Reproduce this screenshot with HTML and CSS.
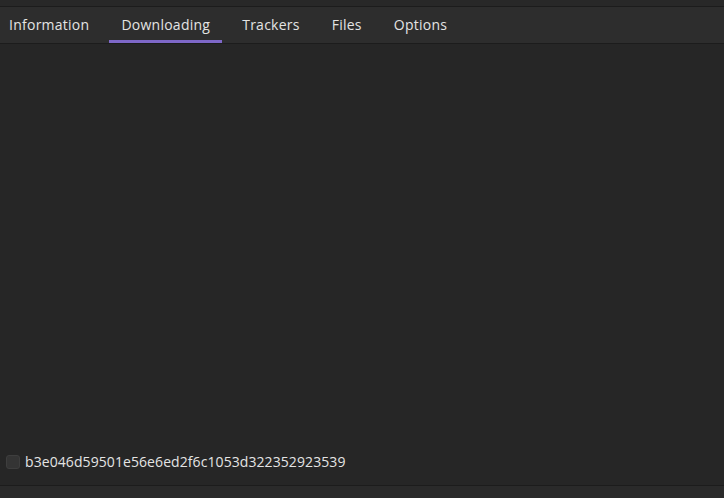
FILE: index.html
```html
<!DOCTYPE html>
<html>
<head>
<meta charset="utf-8">
<link rel="stylesheet" href="styles.css">
</head>
<body>
<div class="app">
  <div class="topstrip"></div>
  <nav class="tabs">
    <div class="tab">Information</div>
    <div class="tab active">Downloading</div>
    <div class="tab">Trackers</div>
    <div class="tab">Files</div>
    <div class="tab">Options</div>
  </nav>
  <main class="content">
    <label class="item">
      <span class="check"></span>
      <span class="hash">b3e046d59501e56e6ed2f6c1053d322352923539</span>
    </label>
  </main>
  <div class="bottomstrip"></div>
</div>
</body>
</html>
```
FILE: styles.css
```css
html, body {
  margin: 0;
  padding: 0;
  background: #262626;
}
.app {
  width: 724px;
  height: 498px;
  display: flex;
  flex-direction: column;
  font-family: "Open Sans", "Noto Sans", sans-serif;
  font-size: 14px;
  color: #e4e4e4;
  overflow: hidden;
}
.topstrip {
  height: 6px;
  background: #282828;
  border-bottom: 1px solid #1c1c1c;
  flex: none;
}
.tabs {
  height: 36px;
  background: #2d2d2d;
  border-bottom: 1px solid #1c1c1c;
  display: flex;
  gap: 8px;
  margin-left: -3px;
  flex: none;
}
.tab {
  padding: 1px 12px 0;
  display: flex;
  align-items: center;
  height: 36px;
  box-sizing: border-box;
  border-bottom: 3px solid transparent;
  letter-spacing: 0.25px;
}
.tab.active {
  border-bottom-color: #7e68c8;
}
.content {
  flex: 1;
  background: #262626;
  display: flex;
  flex-direction: column;
  justify-content: flex-end;
  padding: 0 6px 14px;
  border-bottom: 1px solid #1c1c1c;
}
.item {
  display: flex;
  align-items: center;
  gap: 5px;
}
.check {
  width: 12px;
  height: 12px;
  border: 1px solid #3e3e3e;
  border-radius: 3px;
  background: #343434;
  flex: none;
}
.hash {
  letter-spacing: 0.08px;
}
.bottomstrip {
  height: 12px;
  background: #2a2a2a;
  flex: none;
}
```
